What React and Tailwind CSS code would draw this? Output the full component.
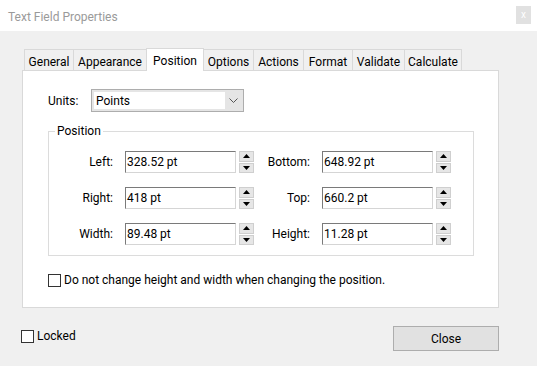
import React from 'react';

const font = { fontFamily: 'Roboto, "Noto Sans", "Liberation Sans", sans-serif' };

const tabs = [
  { name: 'General', w: 'w-[50px]' },
  { name: 'Appearance', w: 'w-[74px]' },
  { name: 'Position', w: 'w-[58px]', active: true },
  { name: 'Options', w: 'w-[51px]' },
  { name: 'Actions', w: 'w-[51px]' },
  { name: 'Format', w: 'w-[50px]' },
  { name: 'Validate', w: 'w-[53px]' },
  { name: 'Calculate', w: 'w-[58px]' },
];

const rows = [
  ['Left:', '328.52 pt', 'Bottom:', '648.92 pt'],
  ['Right:', '418 pt', 'Top:', '660.2 pt'],
  ['Width:', '89.48 pt', 'Height:', '11.28 pt'],
];

const Spin = () => (
  <div className="flex flex-col gap-px ml-[3px] w-[15px] h-[22px]">
    <div className="flex-1 bg-[#e6e6e6] border border-[#cfcfcf] flex items-center justify-center">
      <svg width="7" height="4" viewBox="0 0 7 4"><path d="M0 4 L3.5 0 L7 4 Z" fill="#000" /></svg>
    </div>
    <div className="flex-1 bg-[#e6e6e6] border border-[#cfcfcf] flex items-center justify-center">
      <svg width="7" height="4" viewBox="0 0 7 4"><path d="M0 0 L3.5 4 L7 0 Z" fill="#000" /></svg>
    </div>
  </div>
);

const Field = ({ value }) => (
  <div className="w-[111px] h-[22px] bg-white border border-[#7a7a7a] border-r-[#d5d5d5] border-b-[#d5d5d5] flex items-center pl-[1px] text-[12px] text-black">
    {value}
  </div>
);

const CheckBox = () => (
  <div className="w-[13px] h-[13px] border border-[#333] bg-white shrink-0" />
);

export default function App() {
  return (
    <div className="w-[537px] h-[366px] bg-[#f0f0f0] flex flex-col overflow-hidden text-black" style={font}>
      <div className="h-[31px] bg-white flex items-center justify-between pl-[8px] pr-[6px] pt-[2px] shrink-0">
        <span className="text-[12px] text-[#9a9a9a]">Text Field Properties</span>
        <div className="w-[15px] h-[18px] bg-[#e1e1e1] flex items-center justify-center text-[10px] text-white leading-none mb-[3px]">x</div>
      </div>

      <div className="pl-[22px] pt-[17px] flex flex-col">
        <div className="flex items-end pl-[2px] h-[23px] relative z-10">
          {tabs.map((t) =>
            t.active ? (
              <div key={t.name} className={`${t.w} h-[23px] -ml-px bg-white border border-b-0 border-[#d9d9d9] flex items-start justify-center pt-[3px] text-[12px]`}>
                {t.name}
              </div>
            ) : (
              <div key={t.name} className={`${t.w} h-[21px] -ml-px first:ml-0 bg-[#f0f0f0] border border-b-0 border-[#d9d9d9] flex items-center justify-center pt-[3px] text-[12px] mb-[1px]`}>
                {t.name}
              </div>
            )
          )}
        </div>

        <div className="w-[477px] h-[238px] -mt-px bg-white border border-[#d9d9d9] flex flex-col pl-[25px] pt-[18px]">
          <div className="flex items-center">
            <span className="text-[12px] w-[43px]">Units:</span>
            <div className="w-[153px] h-[23px] bg-[#e5e5e5] border border-[#adadad] flex items-center p-[2px]">
              <div className="w-[131px] h-full bg-white flex items-center pl-[2px] text-[12px]">Points</div>
              <div className="flex-1 flex items-center justify-center">
                <svg width="9" height="6" viewBox="0 0 9 6"><path d="M0.5 0.5 L4.5 4.5 L8.5 0.5" stroke="#555" fill="none" strokeWidth="1" /></svg>
              </div>
            </div>
          </div>

          <fieldset className="w-[426px] h-[133px] mt-[11px] border border-[#dcdcdc] pt-[12px]">
            <legend className="ml-[6px] px-[2px] text-[12px] leading-[16px]">Position</legend>
            <div className="flex flex-col gap-[14px]">
              {rows.map(([l1, v1, l2, v2]) => (
                <div key={l1} className="flex items-center">
                  <span className="w-[65px] text-right text-[12px] pr-px">{l1}</span>
                  <div className="ml-[11px] flex items-center">
                    <Field value={v1} />
                    <Spin />
                  </div>
                  <span className="w-[57px] text-right text-[12px] pr-px">{l2}</span>
                  <div className="ml-[11px] flex items-center">
                    <Field value={v2} />
                    <Spin />
                  </div>
                </div>
              ))}
            </div>
          </fieldset>

          <div className="flex items-center mt-[15px] ml-[0px]">
            <CheckBox />
            <span className="ml-[3px] text-[12px]">Do not change height and width when changing the position.</span>
          </div>
        </div>
      </div>

      <div className="flex items-start justify-between pl-[21px] pr-[38px] mt-[18px]">
        <div className="flex items-center mt-[1px]">
          <CheckBox />
          <span className="ml-[3px] text-[12px]">Locked</span>
        </div>
        <div className="w-[106px] h-[25px] bg-[#e1e1e1] border border-[#adadad] flex items-center justify-center text-[12px]">Close</div>
      </div>
    </div>
  );
}
